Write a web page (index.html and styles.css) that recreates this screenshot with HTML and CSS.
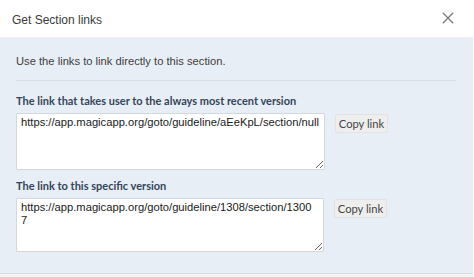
FILE: index.html
```html
<!DOCTYPE html>
<html lang="en">
<head>
<meta charset="utf-8">
<title>Get Section links</title>
<link rel="stylesheet" href="styles.css">
</head>
<body>
<div class="modal">
  <div class="modal-header">
    <span class="modal-title">Get Section links</span>
    <button class="close" type="button" aria-label="Close">
      <svg width="12" height="12" viewBox="0 0 12 12"><path d="M0.8 0.8 L11.2 11.2 M11.2 0.8 L0.8 11.2" stroke="#7a7a7a" stroke-width="1.3" fill="none"/></svg>
    </button>
  </div>
  <div class="modal-body">
    <p class="intro">Use the links to link directly to this section.</p>
    <hr class="sep">
    <div class="field">
      <label class="field-label">The link that takes user to the always most recent version</label>
      <div class="field-row">
        <textarea class="link link-recent" readonly>https://app.magicapp.org/goto/guideline/aEeKpL/section/null</textarea>
        <button class="copy" type="button">Copy link</button>
      </div>
    </div>
    <div class="field field-second">
      <label class="field-label">The link to this specific version</label>
      <div class="field-row">
        <textarea class="link link-specific" readonly>https://app.magicapp.org/goto/guideline/1308/section/13007</textarea>
        <button class="copy" type="button">Copy link</button>
      </div>
    </div>
  </div>
  <div class="modal-footer"></div>
</div>
</body>
</html>
```
FILE: styles.css
```css
html, body {
  margin: 0;
  padding: 0;
  background: #ffffff;
}
.modal {
  width: 473px;
  font-family: "Liberation Sans", Arial, sans-serif;
}
.modal-header {
  height: 38px;
  box-sizing: border-box;
  display: flex;
  align-items: center;
  justify-content: space-between;
  padding: 0 19px 0 12px;
  border-bottom: 1px solid #eef1f4;
  background: #ffffff;
}
.modal-title {
  font-size: 12px;
  color: #3a3a3a;
  line-height: 14px;
  padding-top: 2px;
}
.close {
  border: 0;
  background: transparent;
  padding: 0;
  width: 12px;
  height: 12px;
  display: flex;
  margin-top: -1px;
}
.modal-body {
  background: #e8eef5;
  padding: 16px 17px 21px 16px;
}
.intro {
  margin: 0;
  font-size: 11.2px;
  line-height: 15px;
  color: #404040;
}
.sep {
  border: 0;
  border-top: 1px solid #d8dfe7;
  margin: 11px 0 12px;
  height: 0;
}
.field-second {
  margin-top: 8px;
}
.field-label {
  display: block;
  font-family: Lato, "Liberation Sans", sans-serif;
  font-weight: bold;
  font-size: 11px;
  line-height: 14px;
  padding-top: 1px;
  color: #34465a;
}
.field-row {
  display: flex;
  align-items: flex-start;
  gap: 10px;
  margin-top: 5px;
}
.link {
  box-sizing: border-box;
  width: 309px;
  height: 57px;
  border: 1px solid #d3d8de;
  border-radius: 1px;
  background: #ffffff;
  font-family: "Liberation Sans", Arial, sans-serif;
  font-size: 11.2px;
  line-height: 13px;
  color: #1a1a1a;
  padding: 2px 3px 2px 4px;
  margin: 0;
  word-break: break-all;
  outline: none;
}
.link-specific {
  width: 308px;
  height: 54px;
  padding-right: 6px;
}
.copy {
  font-family: Lato, "Liberation Sans", sans-serif;
  font-size: 11.2px;
  color: #454545;
  background: #eeeeee;
  border: 1px solid #e2e2e2;
  border-radius: 2px;
  height: 19px;
  width: 53px;
  padding: 0;
  margin-top: 1px;
  line-height: 17px;
}
.modal-footer {
  height: 4px;
  border-top: 1px solid #d9dde2;
  background: #f4f4f4;
}
```
